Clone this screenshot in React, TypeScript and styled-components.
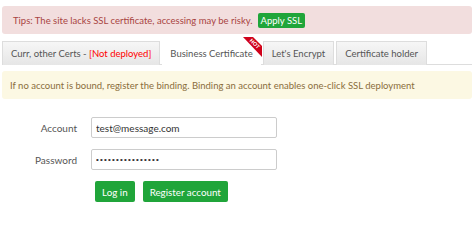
import styled, { createGlobalStyle } from 'styled-components';

const GlobalStyle = createGlobalStyle`
  html, body {
    margin: 0;
    padding: 0;
    background: #ffffff;
  }
  body {
    font-family: Lato, "Noto Sans", sans-serif;
    font-size: 9.5px;
    color: #333;
  }
`

const Page = styled.div`
  width: 474px;
  height: 219px;
  padding: 6px 2px 0 2px;
  box-sizing: border-box;
  overflow: hidden;
`
const TipsBar = styled.div`
  height: 28px;
  display: flex;
  align-items: center;
  gap: 5px;
  padding: 0 11px;
  background: #f2dede;
  color: #a94442;
  border-radius: 3px;
`
const GreenButton = styled.button<{ $small?: boolean }>`
  height: ${p => (p.$small ? 15 : 21)}px;
  padding: 0 ${p => (p.$small ? 3 : 7)}px;
  border: 0;
  border-radius: 2px;
  background: #20a53a;
  color: #fff;
  font-family: inherit;
  font-size: ${p => (p.$small ? 9.5 : 9.8)}px;
  cursor: pointer;
`
const TabRow = styled.div`
  display: flex;
  align-items: flex-end;
  gap: 2px;
  margin-top: 7px;
  border-bottom: 1px solid #ddd;
`
const Tab = styled.div<{ $active?: boolean }>`
  position: relative;
  height: 23px;
  display: flex;
  align-items: center;
  padding: 0 ${p => (p.$active ? 7 : 8)}px;
  margin-bottom: -1px;
  border: 1px solid ${p => (p.$active ? 'transparent' : '#ddd')};
  border-bottom: 0;
  background: ${p => (p.$active ? '#fff' : 'linear-gradient(#f6f6f6, #e6e6e6)')};
  color: #555;
  white-space: nowrap;
`
const NotDeployed = styled.span`
  color: #f00;
`
const HotRibbon = styled.svg`
  position: absolute;
  top: -5px;
  right: -2px;
`
const WarnBar = styled.div`
  height: 28px;
  display: flex;
  align-items: center;
  margin-top: 6px;
  padding: 0 8px;
  background: #fcf8e3;
  color: #8a6d3b;
  border-radius: 3px;
`
const Form = styled.div`
  display: grid;
  grid-template-columns: 75px 186px;
  column-gap: 14px;
  row-gap: 11px;
  margin-top: 18px;
  align-items: center;
`
const Label = styled.label`
  text-align: right;
  color: #555;
  font-size: 10px;
`
const Input = styled.input<{ $dots?: boolean }>`
  height: 21px;
  box-sizing: border-box;
  padding: 0 4px;
  border: 1px solid #ccc;
  border-radius: 2px;
  font-family: ${p => (p.$dots ? '"Liberation Sans", sans-serif' : 'inherit')};
  font-size: ${p => (p.$dots ? 8 : 10)}px;
  letter-spacing: ${p => (p.$dots ? '1.2px' : 'normal')};
  color: #333;
  outline: none;
`
const Buttons = styled.div`
  grid-column: 2;
  display: flex;
  gap: 8px;
  padding-left: 4px;
`

export default function App() {
  return (
    <>
      <GlobalStyle />
      <Page>
        <TipsBar>
          <span>Tips: The site lacks SSL certificate, accessing may be risky.</span>
          <GreenButton $small>Apply SSL</GreenButton>
        </TipsBar>

        <TabRow>
          <Tab>Curr, other Certs -&nbsp;<NotDeployed>[Not deployed]</NotDeployed></Tab>
          <Tab $active>
            Business Certificate
            <HotRibbon width="20" height="22" viewBox="0 0 20 22">
              <polygon points="1,0 11,0 20,9 20,20" fill="#d0021b" />
              <text
                x="12.5"
                y="8.5"
                fill="#fff"
                fontSize="5.5"
                fontWeight="bold"
                fontFamily="Liberation Sans, sans-serif"
                textAnchor="middle"
                transform="rotate(45 12.5 7)"
              >HOT</text>
            </HotRibbon>
          </Tab>
          <Tab>Let's Encrypt</Tab>
          <Tab>Certificate holder</Tab>
        </TabRow>

        <WarnBar>
          If no account is bound, register the binding. Binding an account enables one-click SSL deployment
        </WarnBar>

        <Form>
          <Label>Account</Label>
          <Input defaultValue="test@message.com" />
          <Label>Password</Label>
          <Input $dots type="password" defaultValue="1234567890123456" />
          <Buttons>
            <GreenButton>Log in</GreenButton>
            <GreenButton>Register account</GreenButton>
          </Buttons>
        </Form>
      </Page>
    </>
  );
}
